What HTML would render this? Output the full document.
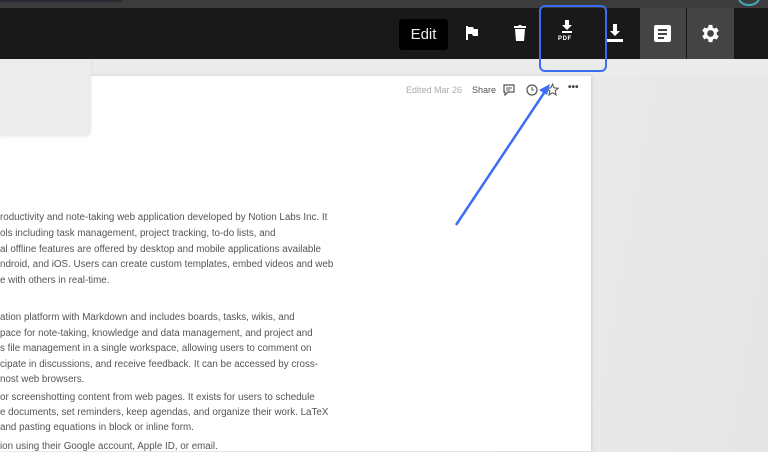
<!DOCTYPE html><html><head><style>
*{margin:0;padding:0;box-sizing:border-box}
body{width:768px;height:451px;overflow:hidden;background:linear-gradient(100deg,#f2f2f2,#e6e6e6);font-family:"Liberation Sans",sans-serif;position:relative}
.a{position:absolute}
.t{position:absolute;left:0;font-size:9.8px;color:#555;white-space:nowrap}
</style></head><body>
<div class="a" style="left:0;top:0;width:768px;height:8px;background:#3c3c3c"></div>
<div class="a" style="left:0;top:0;width:122px;height:2px;background:#2a2a32"></div>
<div class="a" style="left:738px;top:-10px;width:22px;height:16px;border:2px solid #4ab;border-radius:50%"></div>
<div class="a" style="left:0;top:8px;width:768px;height:51px;background:#191919"></div>
<div class="a" style="left:640px;top:8px;width:46px;height:51px;background:#444"></div>
<div class="a" style="left:687px;top:8px;width:47px;height:51px;background:#444"></div>
<div class="a" style="left:399px;top:19px;width:49px;height:31px;background:#000;border-radius:3px;color:#eee;font-size:15px;line-height:31px;text-align:center">Edit</div>
<svg class="a" style="left:464px;top:25px" width="16" height="16" viewBox="0 0 16 16"><path d="M2 1h2v14H2z M4 2h5l1 2h4v7H9l-1-2H4z" fill="#fff"/></svg>
<svg class="a" style="left:513px;top:24px" width="14" height="18" viewBox="0 0 14 18"><path d="M1 2h4l1-1h2l1 1h4v2H1z M2 5h10l-1 12H3z" fill="#fff"/></svg>
<svg class="a" style="left:559px;top:20px" width="16" height="14" viewBox="0 0 16 14"><path d="M6 0h4v5h3l-5 5-5-5h3z M3 11h10v2H3z" fill="#fff"/></svg>
<div class="a" style="left:558px;top:36px;font-size:6px;line-height:6px;font-weight:bold;color:#fff;letter-spacing:.6px">PDF</div>
<svg class="a" style="left:606px;top:24px" width="18" height="19" viewBox="0 0 18 19"><path d="M7 0h4v7h3l-5 5-5-5h3z M1 15h16v3H1z" fill="#fff"/></svg>
<svg class="a" style="left:654px;top:25px" width="17" height="17" viewBox="0 0 17 17"><rect x="0" y="0" width="17" height="17" rx="2" fill="#fff"/><path d="M4 4h9v2H4zM4 8h9v2H4zM4 12h6v2H4z" fill="#444"/></svg>
<svg class="a" style="left:699px;top:22px" width="23" height="23" viewBox="0 0 24 24"><path fill="#fff" fill-rule="evenodd" d="M19.4 13a7.5 7.5 0 000-2l2.1-1.6-2-3.5-2.5 1a7 7 0 00-1.7-1L15 3h-4l-.4 2.7a7 7 0 00-1.7 1l-2.5-1-2 3.5L6.5 11a7.5 7.5 0 000 2l-2.1 1.6 2 3.5 2.5-1a7 7 0 001.7 1L11 21h4l.4-2.7a7 7 0 001.7-1l2.5 1 2-3.5zM13 15.5a3.5 3.5 0 110-7 3.5 3.5 0 010 7z" transform="translate(-1 0)"/></svg>
<div class="a" style="left:0;top:59px;width:768px;height:17px;background:#ebebeb"></div>
<div class="a" style="left:0;top:76px;width:591px;height:375px;background:#fff;box-shadow:1px 0 3px rgba(0,0,0,.1)"></div>
<div class="a" style="left:0;top:59px;width:91px;height:77px;background:#ececec;border-radius:0 0 6px 0;box-shadow:0 1px 3px rgba(0,0,0,.08)"></div>
<div class="a" style="left:406px;top:85px;font-size:9px;color:#aaa">Edited Mar 26</div>
<div class="a" style="left:472px;top:85px;font-size:9px;color:#555">Share</div>
<svg class="a" style="left:503px;top:84px" width="12" height="12" viewBox="0 0 12 12"><path d="M1 1h10v7H5l-3 3V8H1z" fill="none" stroke="#555" stroke-width="1.2"/><path d="M3 4h6M3 6h4" stroke="#555"/></svg>
<svg class="a" style="left:526px;top:84px" width="12" height="12" viewBox="0 0 12 12"><circle cx="6" cy="6" r="5" fill="none" stroke="#555" stroke-width="1.2"/><path d="M6 3v3h2" fill="none" stroke="#555"/></svg>
<svg class="a" style="left:546px;top:83px" width="13" height="13" viewBox="0 0 24 24"><path d="M12 2l3 7 7.5.6-5.7 5 1.8 7.4L12 18l-6.6 4 1.8-7.4-5.7-5L9 9z" fill="none" stroke="#555" stroke-width="2"/></svg>
<div class="a" style="left:568px;top:82px;font-size:10px;color:#444;font-weight:bold">•••</div>
<div class="t" style="top:212px">roductivity and note-taking web application developed by Notion Labs Inc. It</div>
<div class="t" style="top:228px">ols including task management, project tracking, to-do lists, and</div>
<div class="t" style="top:244px">al offline features are offered by desktop and mobile applications available</div>
<div class="t" style="top:259px">ndroid, and iOS. Users can create custom templates, embed videos and web</div>
<div class="t" style="top:275px">e with others in real-time.</div>
<div class="t" style="top:312px">ation platform with Markdown and includes boards, tasks, wikis, and</div>
<div class="t" style="top:328px">pace for note-taking, knowledge and data management, and project and</div>
<div class="t" style="top:343px">s file management in a single workspace, allowing users to comment on</div>
<div class="t" style="top:359px">cipate in discussions, and receive feedback. It can be accessed by cross-</div>
<div class="t" style="top:374px">nost web browsers.</div>
<div class="t" style="top:392px">or screenshotting content from web pages. It exists for users to schedule</div>
<div class="t" style="top:407px">e documents, set reminders, keep agendas, and organize their work. LaTeX</div>
<div class="t" style="top:422px">and pasting equations in block or inline form.</div>
<div class="t" style="top:441px">ion using their Google account, Apple ID, or email.</div>
<div class="a" style="left:539px;top:5px;width:68px;height:67px;border:2px solid #3b6ef2;border-radius:6px"></div>
<svg class="a" style="left:0;top:0" width="768" height="451"><path d="M456 225L544 93" stroke="#3b6ef2" stroke-width="2.5"/><path d="M550 84l-11 6 8 5z" fill="#3b6ef2"/></svg>
</body></html>
